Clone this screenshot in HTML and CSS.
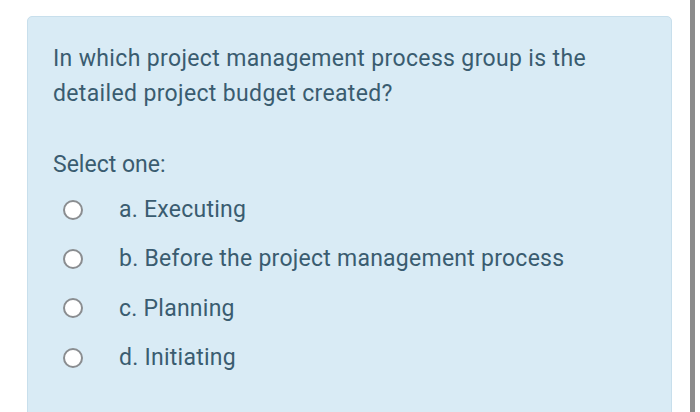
FILE: index.html
```html
<!DOCTYPE html>
<html>
<head>
<meta charset="utf-8">
<link rel="stylesheet" href="styles.css">
</head>
<body>
<div class="page">
  <div class="card">
    <p class="question">In which project management process group is the detailed project budget created?</p>
    <div class="prompt">Select one:</div>
    <div class="answers">
      <label class="answer"><span class="radio"></span><span class="label">a. Executing</span></label>
      <label class="answer"><span class="radio"></span><span class="label">b. Before the project management process</span></label>
      <label class="answer"><span class="radio"></span><span class="label">c. Planning</span></label>
      <label class="answer"><span class="radio"></span><span class="label">d. Initiating</span></label>
    </div>
  </div>
  <div class="edge"></div>
</div>
</body>
</html>
```
FILE: styles.css
```css
html, body {
  margin: 0;
  padding: 0;
  background: #ffffff;
  width: 700px;
  height: 412px;
  overflow: hidden;
}
.page {
  display: flex;
  height: 412px;
  font-family: Roboto, "Noto Sans", sans-serif;
}
.card {
  margin: 16px 0 0 27px;
  width: 645px;
  height: 410px;
  box-sizing: border-box;
  background: #d9ebf5;
  border: 1px solid #c8dfec;
  border-radius: 5px;
  padding: 24px 20px 0 25px;
  color: #3a5c70;
}
.question {
  margin: 0;
  font-size: 23px;
  line-height: 35px;
  letter-spacing: 0.35px;
  width: 560px;
}
.prompt {
  margin-top: 40px;
  font-size: 23px;
  line-height: 28px;
}
.answers {
  display: flex;
  flex-direction: column;
  margin-top: 6px;
}
.answer {
  display: flex;
  align-items: center;
  height: 49.3px;
}
.radio {
  width: 20px;
  height: 20px;
  box-sizing: border-box;
  border: 2px solid #8a8d90;
  border-radius: 50%;
  background: #ffffff;
  margin-left: 10px;
  flex: none;
}
.label {
  margin-left: 36px;
  font-size: 23px;
  letter-spacing: 0.25px;
}
.edge {
  margin-left: 18px;
  width: 5px;
  height: 412px;
  background: #8c8c8c;
}
```
